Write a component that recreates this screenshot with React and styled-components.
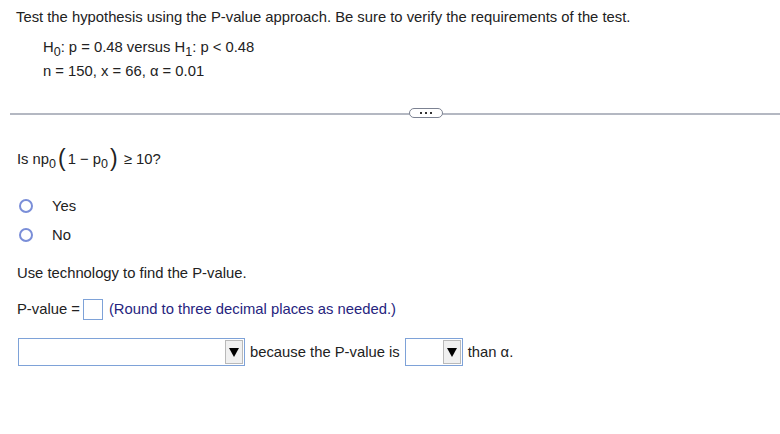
import React from "react"
import styled, { createGlobalStyle } from "styled-components"

const Global = createGlobalStyle`
  body {
    margin: 0;
    background: #fff;
    font-family: "Liberation Sans", Arial, sans-serif;
    font-size: 14.8px;
    color: #222;
  }
`

const Page = styled.div`
  width: 780px;
  height: 434px;
  overflow: hidden;
  display: flex;
  flex-direction: column;
`

const Prompt = styled.div`
  padding: 9px 0 0 16px;
  line-height: 17px;
`

const Given = styled.div`
  padding: 13px 0 0 43px;
  display: flex;
  flex-direction: column;
  gap: 7px;
  line-height: 17px;
`

const Sub = styled.sub`
  font-size: 12.5px;
  vertical-align: -4px;
  line-height: 0;
`

const Divider = styled.div`
  margin: 33px 0 0 10px;
  height: 2px;
  background: #b4b8c2;
  position: relative;
`

const Pill = styled.div`
  position: absolute;
  left: 399px;
  top: -5px;
  width: 32px;
  height: 8px;
  border: 1.5px solid #7c8292;
  border-radius: 6px;
  background: #fff;
  display: flex;
  align-items: center;
  justify-content: center;
  gap: 3px;
  span {
    width: 2px;
    height: 2px;
    background: #333;
  }
`

const Question = styled.div`
  padding: 31px 0 0 17px;
  line-height: 20px;
`

const Paren = styled.span`
  font-size: 23px;
  margin: 0 2px;
  position: relative;
  top: 2px;
`

const Options = styled.div`
  padding: 29px 0 0 19px;
  display: flex;
  flex-direction: column;
  gap: 13px;
`

const Option = styled.label`
  display: flex;
  align-items: center;
  gap: 19px;
  line-height: 16px;
`

const Radio = styled.span`
  width: 10px;
  height: 10px;
  border: 2px solid #7a8ed8;
  border-radius: 50%;
`

const Line = styled.div`
  padding: ${(p) => p.$top}px 0 0 17px;
  display: flex;
  align-items: center;
  line-height: 17px;
`

const Blank = styled.span`
  display: inline-block;
  width: 18px;
  height: 19px;
  border: 1px solid #7ea2d8;
  margin: 0 6px 0 3px;
`

const Hint = styled.span`
  color: #26247e;
`

const Select = styled.div`
  width: ${(p) => p.$w}px;
  height: 26px;
  border: 1px solid #7ea2d8;
  display: flex;
  justify-content: flex-end;
  align-items: center;
  padding-right: 1px;
  margin-right: ${(p) => p.$gap}px;
`

const Arrow = styled.span`
  width: 16px;
  height: 22px;
  background: #f0f0f0;
  border: 1px solid #b9b9b9;
  display: flex;
  align-items: center;
  justify-content: center;
  &::after {
    content: "";
    border-left: 5px solid transparent;
    border-right: 5px solid transparent;
    border-top: 9px solid #000;
  }
`

const Row = styled.div`
  padding: 18px 0 0 18px;
  display: flex;
  align-items: center;
`

const After = styled.span`
  margin-right: 5px;
`

export default function App() {
  return (
    <Page>
      <Global />
      <Prompt>
        Test the hypothesis using the P-value approach. Be sure to verify the requirements of the test.
      </Prompt>
      <Given>
        <div>
          H<Sub>0</Sub>: p = 0.48 versus H<Sub>1</Sub>: p &lt; 0.48
        </div>
        <div>n = 150, x = 66, α = 0.01</div>
      </Given>
      <Divider>
        <Pill>
          <span />
          <span />
          <span />
        </Pill>
      </Divider>
      <Question>
        Is np<Sub>0</Sub>
        <Paren>(</Paren>1 − p<Sub>0</Sub>
        <Paren>)</Paren>&nbsp;≥ 10?
      </Question>
      <Options>
        <Option>
          <Radio />
          Yes
        </Option>
        <Option>
          <Radio />
          No
        </Option>
      </Options>
      <Line $top={22}>Use technology to find the P-value.</Line>
      <Line $top={17}>
        P-value =<Blank />
        <Hint>(Round to three decimal places as needed.)</Hint>
      </Line>
      <Row>
        <Select $w={224} $gap={5}>
          <Arrow />
        </Select>
        <After>because the P-value is</After>
        <Select $w={55} $gap={5}>
          <Arrow />
        </Select>
        than α.
      </Row>
    </Page>
  )
}
